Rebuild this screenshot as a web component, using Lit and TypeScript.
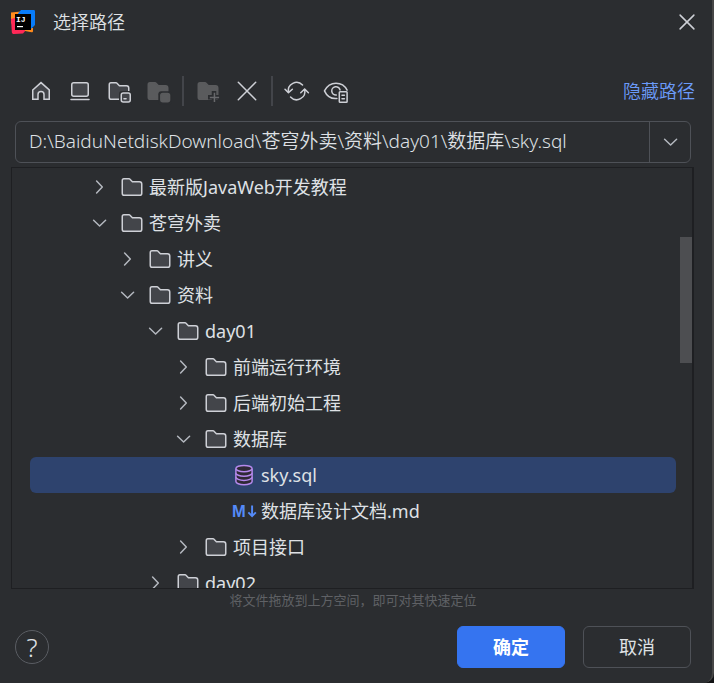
import { LitElement, html, svg, css, nothing, type SVGTemplateResult } from "lit";
import { customElement, property, state } from "lit/decorators.js";
import { classMap } from "lit/directives/class-map.js";
import { styleMap } from "lit/directives/style-map.js";

const FOLDER =
  "M8.1 4.35L8.25 4.5H13C13.83 4.5 14.5 5.17 14.5 6V12.13C14.5 12.95 13.93 13.5 13.37 13.5H2.63C2.07 13.5 1.5 12.95 1.5 12.13V3.87C1.5 3.05 2.07 2.5 2.63 2.5H6.12C6.26 2.5 6.39 2.56 6.48 2.65L8.1 4.35Z";

const ICONS: Record<string, SVGTemplateResult> = {
  folder: svg`<path class="shape" d=${FOLDER}></path>`,
  home: svg`<path class="shape" d="M2.5 7.3L8 2.4L13.5 7.3V13.5H10V10.3A2 2 0 0 0 6 10.3V13.5H2.5Z"></path>`,
  desktop: svg`<rect class="shape" x="2.5" y="2.5" width="11" height="9" rx="1.3"></rect>
    <path class="line" d="M2 13.7H14"></path>`,
  project: svg`<path class="shape" d=${FOLDER}></path>
    <rect class="gap" x="8" y="8" width="9" height="9" rx="2"></rect>
    <rect class="shape" x="9.5" y="9.3" width="6" height="6" rx="1.3"></rect>
    <path class="line" d="M11.3 13.2H12.7"></path>`,
  module: svg`<path class="dim" d=${FOLDER}></path>
    <rect class="gap" x="8.2" y="8.2" width="9" height="9" rx="2"></rect>
    <rect class="dim" x="9.9" y="9.6" width="5.8" height="5.6" rx="1.3"></rect>`,
  newFolder: svg`<path class="dim" d=${FOLDER}></path>
    <path class="cut" d="M12 8V16M8 12.2H16"></path>
    <path class="dimline" d="M12.3 9.2V15.4M9.2 12.3H15.4"></path>`,
  cross: svg`<path class="line" d="M2.2 2.2L13.8 13.8M13.8 2.2L2.2 13.8"></path>`,
  close: svg`<path class="line" d="M3.4 3.4L12.6 12.6M12.6 3.4L3.4 12.6"></path>`,
  refresh: svg`<path class="line" d="M2.3 8.8A5.5 5.5 0 0 1 11.7 4M13.1 7A5.5 5.5 0 0 1 3.7 12"></path>
    <path class="line" d="M0 6.8L2.3 9.1L4.9 6.8M10.5 9.2L13.1 6.7L15.6 9.2"></path>`,
  eye: svg`<path class="line" d="M8.6 13C4.8 13.4 1.8 11.2 0.3 7.9C2 4.6 4.8 2.8 8 2.8C11.2 2.8 14 4.6 15.4 7.4"></path>
    <path class="line" d="M8.2 10.7A2.8 2.8 0 1 1 10.7 7.3"></path>
    <rect class="doc" x="10.2" y="8.5" width="5.2" height="7" rx="0.5"></rect>
    <path class="line" d="M12 10.9H13.6M12 13.1H13.6"></path>`,
  right: svg`<path class="chevron" d="M6.4 4L10.2 8L6.4 12"></path>`,
  down: svg`<path class="chevron" d="M4.4 6.2L8.4 10L12.4 6.2"></path>`,
  sql: svg`<g class="db"><path d="M2.6 3.8V12.3C2.6 13.5 5 14.5 8 14.5S13.4 13.5 13.4 12.3V3.8"></path>
    <ellipse cx="8" cy="3.7" rx="5.4" ry="2.1"></ellipse>
    <path d="M2.6 6.6C2.6 7.8 5 8.8 8 8.8S13.4 7.8 13.4 6.6M2.6 9.4C2.6 10.6 5 11.6 8 11.6S13.4 10.6 13.4 9.4"></path></g>`,
  md: svg`<text class="mark" x="0" y="12">M</text>
    <path class="arrow" d="M13.4 4.4V11.2M10.9 8.9L13.4 11.4L15.9 8.9"></path>`,
};

@customElement("ui-icon")
class UiIcon extends LitElement {
  @property() name = "folder";

  static styles = css`
    :host { display: block; flex: none; width: 24px; height: 24px; }
    svg { display: block; width: 100%; height: 100%; overflow: visible; fill: none; }
    .shape { fill: #43454a; stroke: #ced0d6; }
    .line { stroke: #ced0d6; stroke-linecap: round; stroke-linejoin: round; }
    .chevron { stroke: #b4b8bf; stroke-linecap: round; stroke-linejoin: round; }
    .dim { fill: #5a5b5d; stroke: #5a5b5d; }
    .dimline { stroke: #68696c; }
    .gap { fill: #2b2d30; }
    .cut { stroke: #2b2d30; stroke-width: 3; }
    .doc { fill: #2b2d30; stroke: #ced0d6; }
    .db { fill: #2f2936; stroke: #b589ec; }
    .mark { fill: #548af7; font: bold 11px "Liberation Sans", sans-serif; }
    .arrow { stroke: #548af7; stroke-width: 1.3; }
  `;

  render() {
    return html`<svg viewBox="0 0 16 16" aria-hidden="true">${ICONS[this.name]}</svg>`;
  }
}

interface TreeNode {
  label: string;
  level: number;
  icon: string;
  open?: boolean;
}

const NODES: TreeNode[] = [
  { label: "最新版JavaWeb开发教程", level: 0, icon: "folder", open: false },
  { label: "苍穹外卖", level: 0, icon: "folder", open: true },
  { label: "讲义", level: 1, icon: "folder", open: false },
  { label: "资料", level: 1, icon: "folder", open: true },
  { label: "day01", level: 2, icon: "folder", open: true },
  { label: "前端运行环境", level: 3, icon: "folder", open: false },
  { label: "后端初始工程", level: 3, icon: "folder", open: false },
  { label: "数据库", level: 3, icon: "folder", open: true },
  { label: "sky.sql", level: 4, icon: "sql" },
  { label: "数据库设计文档.md", level: 4, icon: "md" },
  { label: "项目接口", level: 3, icon: "folder", open: false },
  { label: "day02", level: 2, icon: "folder", open: false },
];

const TOOLS = [
  [
    { icon: "home", label: "主目录" },
    { icon: "desktop", label: "桌面" },
    { icon: "project", label: "项目目录" },
    { icon: "module", label: "模块目录", disabled: true },
  ],
  [
    { icon: "newFolder", label: "新建文件夹", disabled: true },
    { icon: "cross", label: "删除" },
  ],
  [
    { icon: "refresh", label: "刷新" },
    { icon: "eye", label: "显示隐藏文件" },
  ],
];

@customElement("app-root")
class AppRoot extends LitElement {
  @state() private selected = "sky.sql";

  static styles = css`
    * { box-sizing: border-box; }
    :host {
      display: block;
      background: #111214;
      color: #dfe1e5;
      font: 400 18px/24px "Noto Sans", "Noto Sans CJK SC", sans-serif;
    }
    button, input { font: inherit; color: inherit; background: none; border: 0; padding: 0; margin: 0; }
    .dialog {
      display: flex;
      flex-direction: column;
      height: 100vh;
      min-height: 400px;
      background: #2b2d30;
      border-right: 2px solid #464646;
      border-bottom-right-radius: 10px;
    }
    .titlebar { display: flex; align-items: center; height: 44px; padding: 0 13px 0 11px; }
    .logo { width: 24px; height: 24px; margin-right: 18px; }
    .logo text { font: bold 8px "Liberation Mono", monospace; fill: #fff; }
    h1 { flex: 1; margin: 0; font: inherit; font-weight: 350; }
    .toolbar { display: flex; align-items: center; gap: 12px; height: 46px; margin: 24px 17px 0 29px; }
    .group { display: flex; gap: 15px; }
    .sep { width: 2px; height: 30px; background: #43454a; }
    a { margin-left: auto; color: #6b9bfa; font-weight: 350; text-decoration: none; }
    .path {
      display: flex;
      flex: none;
      height: 42px;
      margin: 7px 21px 4px 15px;
      border: 1px solid #4e5157;
      border-radius: 6px;
    }
    .path input { flex: 1; min-width: 0; padding: 0 13px 2px; font-size: 19px; font-weight: 350; outline: none; }
    .drop { display: grid; place-items: center; width: 41px; border-left: 1px solid #4e5157; }
    .tree {
      position: relative;
      flex: 1;
      min-height: 0;
      overflow: hidden;
      margin: 0 18px 0 11px;
      padding: 1px 16px 0 18px;
      border: 1px solid #1e1f22;
      border-right-width: 2px;
    }
    .row { display: flex; align-items: center; height: 36px; border-radius: 6px; white-space: nowrap; }
    .row.selected { background: #2e436e; }
    .twisty { width: 24px; height: 24px; margin-right: 9px; }
    .label { margin-left: 5px; }
    .thumb { position: absolute; top: 69px; right: 0; width: 12px; height: 126px; background: #4d4e51; }
    .hint { margin: 0; padding-right: 6px; font-size: 13px; line-height: 22px; text-align: center; color: #5f6165; }
    .footer { display: flex; align-items: center; gap: 18px; margin: 15px 21px 15px 15px; }
    .help { width: 34px; height: 34px; margin-right: auto; border: 1px solid #5a5d63; border-radius: 50%; font-size: 26px; font-weight: 300; line-height: 32px; }
    .btn { width: 108px; height: 42px; border: 1px solid #4e5157; border-radius: 6px; }
    .btn.primary { background: #3574f0; border-color: #3574f0; color: #fff; font-weight: 700; }
  `;

  private row(node: TreeNode) {
    const expandable = node.open !== undefined;
    const selected = node.label === this.selected;
    return html`<div
      class=${classMap({ row: true, selected })}
      role="treeitem"
      aria-level=${node.level + 1}
      aria-selected=${selected}
      aria-expanded=${expandable ? String(node.open) : nothing}
      style=${styleMap({ paddingLeft: `${57 + node.level * 28}px` })}
      @click=${() => (this.selected = node.label)}
    >
      ${expandable
        ? html`<button class="twisty" aria-label="展开或折叠"><ui-icon name=${node.open ? "down" : "right"}></ui-icon></button>`
        : html`<span class="twisty"></span>`}
      <ui-icon name=${node.icon}></ui-icon>
      <span class="label">${node.label}</span>
    </div>`;
  }

  render() {
    return html`<main class="dialog">
      <header class="titlebar">
        <svg class="logo" viewBox="0 0 24 24" aria-hidden="true">
          <path fill="#ff8a1c" d="M0 2.5L10 1.5L12 12L2 17L0 12Z"></path>
          <path fill="#fe2857" d="M0 9L7 7L15 20L12 23.5L3 24C1.5 24 1 23.5 0.8 22Z"></path>
          <path fill="#ff8a1c" d="M14 18H22V21C22 22 21.5 22.3 20.5 22.2L14 21Z"></path>
          <path fill="#087cfa" d="M10 0H22.5C23.5 0 24 .5 24 1.5V15L20 19L9 9L7 3.5Z"></path>
          <rect x="4" y="4" width="16" height="16"></rect>
          <text x="5" y="11.5">IJ</text>
          <rect x="6" y="16" width="6" height="1.2" fill="#fff"></rect>
        </svg>
        <h1>选择路径</h1>
        <button aria-label="关闭"><ui-icon name="close"></ui-icon></button>
      </header>
      <div class="toolbar" role="toolbar">
        ${TOOLS.map(
          (group, i) => html`${i ? html`<span class="sep"></span>` : nothing}
            <div class="group">
              ${group.map(
                (t) => html`<button aria-label=${t.label} ?disabled=${"disabled" in t}><ui-icon name=${t.icon}></ui-icon></button>`
              )}
            </div>`
        )}
        <a href="#path">隐藏路径</a>
      </div>
      <div class="path" id="path">
        <input aria-label="路径" .value=${"D:\\BaiduNetdiskDownload\\苍穹外卖\\资料\\day01\\数据库\\sky.sql"} />
        <button class="drop" aria-label="最近的路径"><ui-icon name="down"></ui-icon></button>
      </div>
      <div class="tree" role="tree" aria-label="文件">
        ${NODES.map((n) => this.row(n))}
        <div class="thumb"></div>
      </div>
      <p class="hint">将文件拖放到上方空间，即可对其快速定位</p>
      <footer class="footer">
        <button class="help" aria-label="帮助">?</button>
        <button class="btn primary">确定</button>
        <button class="btn">取消</button>
      </footer>
    </main>`;
  }
}
